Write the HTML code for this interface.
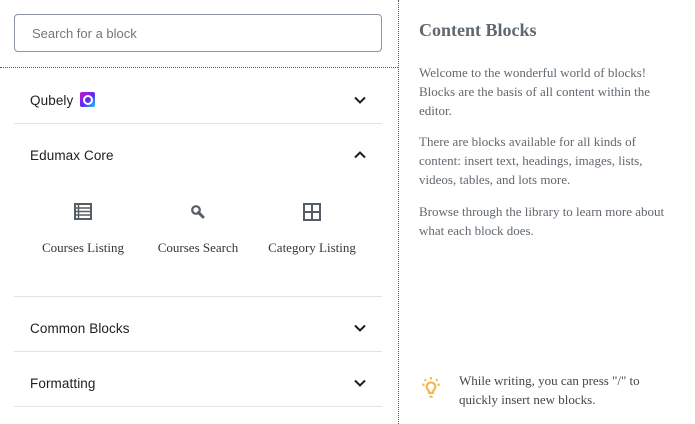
<!DOCTYPE html>
<html><head><style>
body{margin:0;width:695px;height:424px;background:#fff;position:relative;overflow:hidden;font-family:"Liberation Sans",sans-serif}
.a{position:absolute}
.search{left:14px;top:14px;width:366px;height:36px;border:1px solid #8d96a0;border-radius:4px;box-sizing:content-box}
.search span{position:absolute;left:17px;top:11px;font-size:13px;color:#72777c}
.hd{left:30px;font-size:13.5px;color:#1e1e1e;font-family:"Liberation Sans",sans-serif;letter-spacing:0.1px}
.sep{left:14px;width:368px;height:1px;background:#e2e4e7}
.chev{left:354px;width:12px;height:8px}
.lbl{font-family:"Liberation Serif",serif;font-size:13px;color:#32373c;text-align:center;width:120px}
.r{font-family:"Liberation Serif",serif;color:#60686f;font-size:13px;line-height:19px}
</style></head><body>
<div class="a search"><span>Search for a block</span></div>
<div class="a" style="left:0;top:67px;width:398px;border-top:1px dotted #555"></div>
<div class="a" style="left:398px;top:0;height:424px;border-left:1px dotted #555"></div>

<div class="a hd" style="top:93px">Qubely</div>
<div class="a" style="left:80px;top:92px;width:15px;height:15px;border-radius:2px;background:linear-gradient(135deg,#c213d7,#5a2cf0 55%,#1ec9f4)"><div style="position:absolute;left:3px;top:3px;width:6px;height:6px;border:2px solid #fff;border-radius:50%"></div></div>
<svg class="a chev" style="top:96px" viewBox="0 0 12 8"><path d="M1 1.5l5 5 5-5" fill="none" stroke="#1e1e1e" stroke-width="2"/></svg>
<div class="a sep" style="top:123px"></div>

<div class="a hd" style="top:148px">Edumax Core</div>
<svg class="a chev" style="top:151px" viewBox="0 0 12 8"><path d="M1 6.5l5-5 5 5" fill="none" stroke="#1e1e1e" stroke-width="2"/></svg>

<svg class="a" style="left:74px;top:203px" width="18" height="17" viewBox="0 0 18 17"><rect x="1" y="1" width="16" height="15" fill="none" stroke="#555d66" stroke-width="2"/><path d="M1 5h16M1 8.5h16M1 12h16M4.5 1v15" stroke="#555d66" stroke-width="1.5"/></svg>
<svg class="a" style="left:190px;top:204px" width="16" height="16" viewBox="0 0 16 16"><circle cx="6" cy="6" r="3.8" fill="none" stroke="#555d66" stroke-width="2.2"/><path d="M8.5 8.5l4.5 4.5" stroke="#555d66" stroke-width="3" stroke-linecap="round"/></svg>
<svg class="a" style="left:303px;top:203px" width="18" height="18" viewBox="0 0 18 18"><rect x="1" y="1" width="16" height="16" fill="none" stroke="#555d66" stroke-width="2"/><path d="M9 1v16M1 9h16" stroke="#555d66" stroke-width="2"/></svg>
<div class="a lbl" style="left:23px;top:240px">Courses Listing</div>
<div class="a lbl" style="left:138px;top:240px">Courses Search</div>
<div class="a lbl" style="left:252px;top:240px">Category Listing</div>
<div class="a sep" style="top:296px"></div>

<div class="a hd" style="top:321px">Common Blocks</div>
<svg class="a chev" style="top:324px" viewBox="0 0 12 8"><path d="M1 1.5l5 5 5-5" fill="none" stroke="#1e1e1e" stroke-width="2"/></svg>
<div class="a sep" style="top:351px"></div>
<div class="a hd" style="top:376px">Formatting</div>
<svg class="a chev" style="top:379px" viewBox="0 0 12 8"><path d="M1 1.5l5 5 5-5" fill="none" stroke="#1e1e1e" stroke-width="2"/></svg>
<div class="a sep" style="top:406px"></div>

<div class="a r" style="left:419px;top:19px;font-size:18px;font-weight:bold;line-height:22px">Content Blocks</div>
<div class="a r" style="left:419px;top:63px;width:250px">Welcome to the wonderful world of blocks! Blocks are the basis of all content within the editor.</div>
<div class="a r" style="left:419px;top:132px;width:250px">There are blocks available for all kinds of content: insert text, headings, images, lists, videos, tables, and lots more.</div>
<div class="a r" style="left:419px;top:202px;width:250px">Browse through the library to learn more about what each block does.</div>
<svg class="a" style="left:418px;top:375px" width="26" height="26" viewBox="0 0 24 24"><path d="M9 13.5a4 4 0 1 1 6 0c-1 1-1.2 2-1.2 3h-3.6c0-1-.2-2-1.2-3z" fill="none" stroke="#f0b849" stroke-width="2"/><path d="M10.5 20h3M12 2v2M4 9h2M18 9h2M6 4l1.3 1.3M18 4l-1.3 1.3" stroke="#f0b849" stroke-width="2"/></svg>
<div class="a r" style="left:459px;top:371px;width:220px;color:#40464d">While writing, you can press "/" to quickly insert new blocks.</div>
</body></html>
